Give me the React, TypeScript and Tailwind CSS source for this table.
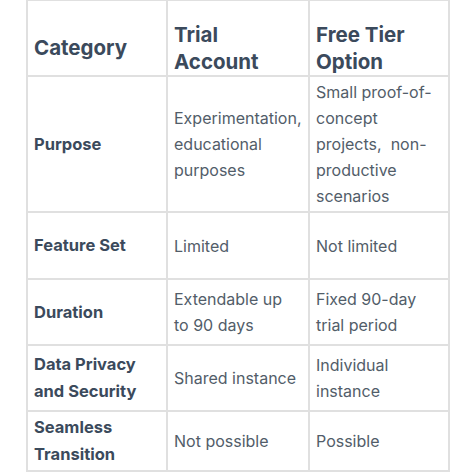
const rows: { label: string[]; trial: string[]; free: string[]; h: string }[] = [
  {
    label: ["Purpose"],
    trial: ["Experimentation,", "educational", "purposes"],
    free: ["Small proof-of-", "concept", "projects,  non-", "productive", "scenarios"],
    h: "h-[134px]",
  },
  { label: ["Feature Set"], trial: ["Limited"], free: ["Not limited"], h: "h-[67px]" },
  { label: ["Duration"], trial: ["Extendable up", "to 90 days"], free: ["Fixed 90-day", "trial period"], h: "h-[66px]" },
  { label: ["Data Privacy", "and Security"], trial: ["Shared instance"], free: ["Individual", "instance"], h: "h-[66px]" },
  { label: ["Seamless", "Transition"], trial: ["Not possible"], free: ["Possible"], h: "h-[59px]" },
];

const cell = "border-2 border-[#e0e0e0] px-[6px] py-[2px] align-middle";

function Lines({ lines }: { lines: string[] }) {
  return (
    <>
      {lines.map((l) => (
        <div key={l} className="whitespace-pre">
          {l}
        </div>
      ))}
    </>
  );
}

export default function App() {
  return (
    <div className="w-[474px] h-[473px] bg-white overflow-hidden pl-[26px]" style={{ fontFamily: "Inter, sans-serif" }}>
      <table className="border-collapse table-fixed w-[422px] -mt-px">
        <colgroup>
          <col className="w-[140px]" />
          <col className="w-[142px]" />
          <col className="w-[140px]" />
        </colgroup>
        <thead>
          <tr className="h-[76px]">
            {[["Category"], ["Trial", "Account"], ["Free Tier", "Option"]].map((h, i) => (
              <th
                key={i}
                className={`border-2 border-[#e0e0e0] px-[6px] pt-0 ${i === 0 ? "pb-[14px]" : "pb-0"} align-bottom text-left text-[20.5px] leading-[27px] font-bold text-[#3b4a5c]`}
              >
                <Lines lines={h} />
              </th>
            ))}
          </tr>
        </thead>
        <tbody className="text-[16px] leading-[26px] text-[#525d69]">
          {rows.map((r) => (
            <tr key={r.label[0]} className={r.h}>
              <td className={`${cell} font-bold text-[16.5px] leading-[27px] text-[#3b4a5c]`}>
                <Lines lines={r.label} />
              </td>
              <td className={cell}>
                <Lines lines={r.trial} />
              </td>
              <td className={cell}>
                <Lines lines={r.free} />
              </td>
            </tr>
          ))}
        </tbody>
      </table>
    </div>
  );
}
